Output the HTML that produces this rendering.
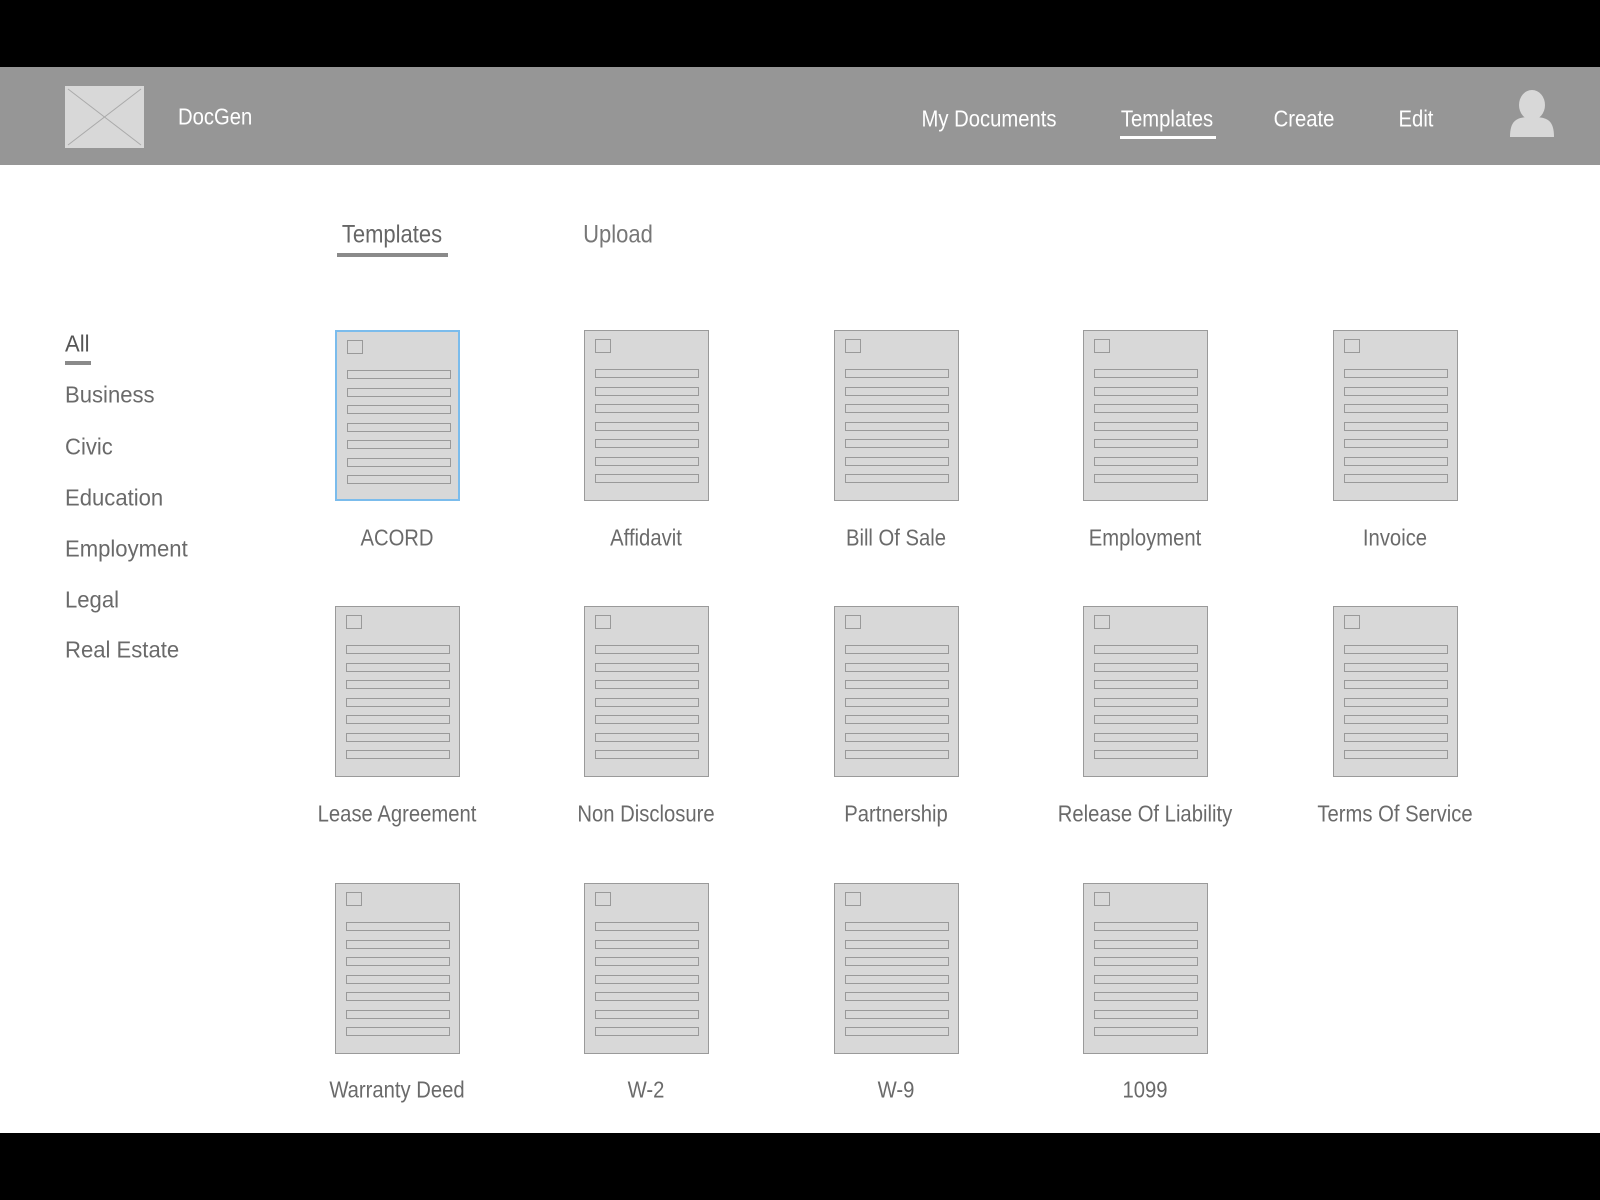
<!DOCTYPE html>
<html><head><style>
*{margin:0;padding:0;box-sizing:border-box}
body{width:1600px;height:1200px;background:#000;position:relative;overflow:hidden;font-family:"Liberation Sans",sans-serif}
.main{position:absolute;left:0;top:67px;width:1600px;height:1066px;background:#fff}
.hdr{position:absolute;left:0;top:67px;width:1600px;height:98px;background:#969696}
.t{position:absolute;white-space:nowrap;transform:translate(-50%,-50%) scaleX(0.88);}
.l{position:absolute;white-space:nowrap;transform-origin:left center;transform:translateY(-50%) scaleX(0.96);font-size:23px;color:#6a6a6a}
.nav{color:#fff;font-size:23px}
.doc{position:absolute;width:125px;height:171px;background:#d8d8d8;border:1px solid #9a9a9a}
.doc.sel{border:2px solid #7bbcec}
.cb{position:absolute;left:10px;top:8px;width:16px;height:14px;border:1.5px solid #999}
.ln{position:absolute;left:10px;width:104px;height:9px;border:1.5px solid #999}
.lab{position:absolute;white-space:nowrap;transform:translate(-50%,-50%) scaleX(0.88);font-size:23px;color:#6a6a6a}
</style></head><body>
<div class="main"></div>
<div class="hdr"></div>
<svg style="position:absolute;left:65px;top:86px" width="79" height="62"><rect x="0" y="0" width="79" height="62" fill="#d8d8d8"/><line x1="3" y1="3" x2="76" y2="59" stroke="#aaa"/><line x1="76" y1="3" x2="3" y2="59" stroke="#aaa"/></svg>
<div class="l" style="left:178px;top:117px;color:#fff;transform:translateY(-50%) scaleX(0.88)">DocGen</div>
<div class="t nav" style="left:989px;top:119px">My Documents</div>
<div class="t nav" style="left:1167px;top:119px">Templates</div>
<div style="position:absolute;left:1120px;top:136px;width:96px;height:3px;background:#fff"></div>
<div class="t nav" style="left:1304px;top:119px">Create</div>
<div class="t nav" style="left:1416px;top:119px">Edit</div>
<svg style="position:absolute;left:1508px;top:89px" width="48" height="50"><ellipse cx="24" cy="16" rx="13" ry="15" fill="#d8d8d8"/><path d="M2 48 C2 30 10 28 24 28 C38 28 46 30 46 48 Z" fill="#d8d8d8"/></svg>
<div class="t" style="left:392px;top:235px;font-size:25px;color:#666">Templates</div>
<div style="position:absolute;left:337px;top:253px;width:111px;height:4px;background:#8a8a8a"></div>
<div class="t" style="left:618px;top:235px;font-size:25px;color:#777">Upload</div>
<div class="l" style="left:65px;top:344px;color:#555">All</div>
<div style="position:absolute;left:65px;top:361px;width:26px;height:4px;background:#8a8a8a"></div>
<div class="l" style="left:65px;top:395px">Business</div>
<div class="l" style="left:65px;top:447px">Civic</div>
<div class="l" style="left:65px;top:498px">Education</div>
<div class="l" style="left:65px;top:549px">Employment</div>
<div class="l" style="left:65px;top:600px">Legal</div>
<div class="l" style="left:65px;top:650px">Real Estate</div>
<div id="g"></div>
<script>
var names=["ACORD","Affidavit","Bill Of Sale","Employment","Invoice","Lease Agreement","Non Disclosure","Partnership","Release Of Liability","Terms Of Service","Warranty Deed","W-2","W-9","1099"];
var cx=[397,646,896,1145,1395],ty=[330,606,883],ly=[538,814,1090],h="";
names.forEach(function(n,i){var c=i%5,r=Math.floor(i/5);
h+='<div class="doc'+(i==0?' sel':'')+'" style="left:'+(cx[c]-62)+'px;top:'+ty[r]+'px"><div class="cb"></div>';
for(var k=0;k<7;k++)h+='<div class="ln" style="top:'+(38+k*17.5)+'px"></div>';
h+='</div><div class="lab" style="left:'+cx[c]+'px;top:'+ly[r]+'px">'+n+'</div>';});
document.getElementById("g").innerHTML=h;
</script>
</body></html>
